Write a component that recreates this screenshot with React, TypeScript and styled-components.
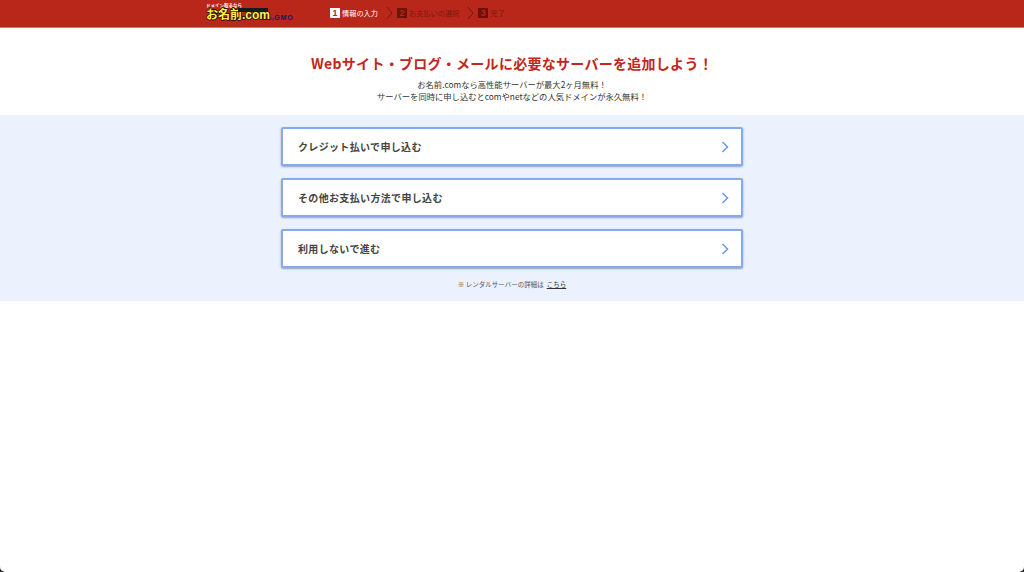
import styled, { createGlobalStyle } from 'styled-components';

const GlobalStyle = createGlobalStyle`
  html, body {
    margin: 0;
    padding: 0;
    background: #fff;
  }
  body {
    font-family: "Noto Sans CJK JP", "Noto Sans", sans-serif;
    color: #333;
  }
`;

const Page = styled.div`
  position: relative;
  width: 1024px;
  height: 572px;
  overflow: hidden;
  background: #fff;
`;

const Header = styled.header`
  height: 27px;
  background: #b9261a;
  border-bottom: 1px solid #d9776e;
  display: flex;
  align-items: center;
  padding-left: 205px;
`;

const Logo = styled.div`
  position: relative;
  width: 125px;
  height: 19px;
  margin-top: -2px;
  display: flex;
  flex-direction: column;
  line-height: 1;
`;

const LogoTag = styled.span`
  font-size: 4.5px;
  font-weight: 700;
  color: #fff;
  height: 5px;
  line-height: 5px;
  margin-left: 1px;
`;

const LogoRow = styled.div`
  display: flex;
  align-items: flex-end;
  height: 14px;
`;

const LogoName = styled.span`
  font-family: "Liberation Sans", "Noto Sans CJK JP", sans-serif;
  font-size: 12px;
  line-height: 14px;
  font-weight: 700;
  color: #fff04a;
  -webkit-text-stroke: 1.6px #111;
  paint-order: stroke fill;
  margin-left: 1px;
`;

const LogoBy = styled.span`
  font-family: "Liberation Sans", sans-serif;
  font-size: 4px;
  line-height: 7px;
  color: #17255f;
`;

const LogoGmo = styled.span`
  font-family: "Liberation Sans", sans-serif;
  font-size: 7px;
  line-height: 9px;
  font-weight: 700;
  letter-spacing: 0.8px;
  color: #0f1d5c;
`;

const LogoBar = styled.span`
  position: absolute;
  left: 33px;
  top: 5px;
  width: 30px;
  height: 4px;
  background: #1a1a1a;
`;

const Steps = styled.ol`
  list-style: none;
  margin: -2px 0 0;
  padding: 0;
  display: flex;
  align-items: center;
`;

const Step = styled.li`
  display: flex;
  align-items: center;
  gap: 2px;
`;

const StepNumber = styled.span<{ $active?: boolean }>`
  width: 10px;
  height: 10px;
  display: flex;
  align-items: center;
  justify-content: center;
  font-family: "Liberation Sans", sans-serif;
  font-size: 9px;
  font-weight: 700;
  background: ${(p) => (p.$active ? '#fff' : '#6e1108')};
  color: #b9261a;
`;

const StepLabel = styled.span<{ $active?: boolean }>`
  font-size: 7.2px;
  line-height: 10px;
  white-space: nowrap;
  color: ${(p) => (p.$active ? '#fff' : '#7a1a10')};
`;

const StepArrow = styled.svg`
  width: 7px;
  height: 14px;
  margin: 0 4px 0 8px;
  flex: none;
`;

const Intro = styled.section`
  height: 87px;
  display: flex;
  flex-direction: column;
  align-items: center;
  padding-top: 24px;
  box-sizing: border-box;
`;

const Title = styled.h1`
  margin: 0 0 4px;
  font-size: 14px;
  line-height: 22px;
  font-weight: 700;
  letter-spacing: 0.28px;
  color: #c1271c;
  white-space: nowrap;
`;

const Lead = styled.p`
  margin: 0;
  font-size: 8.3px;
  line-height: 12px;
  text-align: center;
  color: #333;
  white-space: nowrap;
`;

const Band = styled.section`
  height: 186px;
  background: #ebf1fd;
  box-sizing: border-box;
  padding-top: 12px;
  display: flex;
  flex-direction: column;
  align-items: center;
`;

const Options = styled.div`
  display: flex;
  flex-direction: column;
  gap: 12px;
`;

const Option = styled.a`
  width: 462px;
  height: 39px;
  box-sizing: border-box;
  display: flex;
  align-items: center;
  justify-content: space-between;
  padding: 0 12px 1px 15px;
  background: #fff;
  border: 2px solid #86a9f0;
  border-radius: 2px;
  box-shadow: 0 1px 2px rgba(40, 60, 110, 0.45);
  font-size: 10px;
  font-weight: 700;
  letter-spacing: 0.34px;
  color: #444;
  text-decoration: none;
`;

const Chevron = styled.svg`
  width: 8px;
  height: 12px;
  margin-top: 1px;
  flex: none;
`;

const Note = styled.p`
  margin: 11px 0 0;
  font-size: 6.5px;
  line-height: 10px;
  color: #555;
`;

const NoteLink = styled.a`
  margin-left: 3px;
  color: #333;
  text-decoration: underline;
`;

const Corner = styled.svg<{ $right?: boolean }>`
  position: absolute;
  bottom: 0;
  width: 5px;
  height: 5px;
  ${(p) => (p.$right ? 'right: 0; transform: scaleX(-1);' : 'left: 0;')}
`;

const options = ['クレジット払いで申し込む', 'その他お支払い方法で申し込む', '利用しないで進む'];

function Arrow() {
  return (
    <StepArrow viewBox="0 0 7 14">
      <path d="M1 1l5 6-5 6" fill="none" stroke="#7a1a10" strokeWidth="1" />
    </StepArrow>
  );
}

export default function App() {
  return (
    <Page>
      <GlobalStyle />
      <Header>
        <Logo>
          <LogoTag>ドメイン取るなら</LogoTag>
          <LogoRow>
            <LogoName>お名前.com</LogoName>
            <LogoBy>by</LogoBy>
            <LogoGmo>GMO</LogoGmo>
          </LogoRow>
          <LogoBar />
        </Logo>
        <Steps>
          <Step>
            <StepNumber $active>1</StepNumber>
            <StepLabel $active>情報の入力</StepLabel>
          </Step>
          <Arrow />
          <Step>
            <StepNumber>2</StepNumber>
            <StepLabel>お支払いの選択</StepLabel>
          </Step>
          <Arrow />
          <Step>
            <StepNumber>3</StepNumber>
            <StepLabel>完了</StepLabel>
          </Step>
        </Steps>
      </Header>
      <Intro>
        <Title>Webサイト・ブログ・メールに必要なサーバーを追加しよう！</Title>
        <Lead>
          お名前.comなら高性能サーバーが最大2ヶ月無料！
          <br />
          サーバーを同時に申し込むとcomやnetなどの人気ドメインが永久無料！
        </Lead>
      </Intro>
      <Band>
        <Options>
          {options.map((label) => (
            <Option key={label} href="#">
              {label}
              <Chevron viewBox="0 0 8 12">
                <path d="M1.5 1l5 5-5 5" fill="none" stroke="#6a96f0" strokeWidth="1.5" />
              </Chevron>
            </Option>
          ))}
        </Options>
        <Note>
          ※ レンタルサーバーの詳細は<NoteLink href="#">こちら</NoteLink>
        </Note>
      </Band>
      <Corner viewBox="0 0 5 5">
        <path d="M0 0a5 5 0 0 0 5 5H0z" fill="#222" />
      </Corner>
      <Corner $right viewBox="0 0 5 5">
        <path d="M0 0a5 5 0 0 0 5 5H0z" fill="#222" />
      </Corner>
    </Page>
  );
}
